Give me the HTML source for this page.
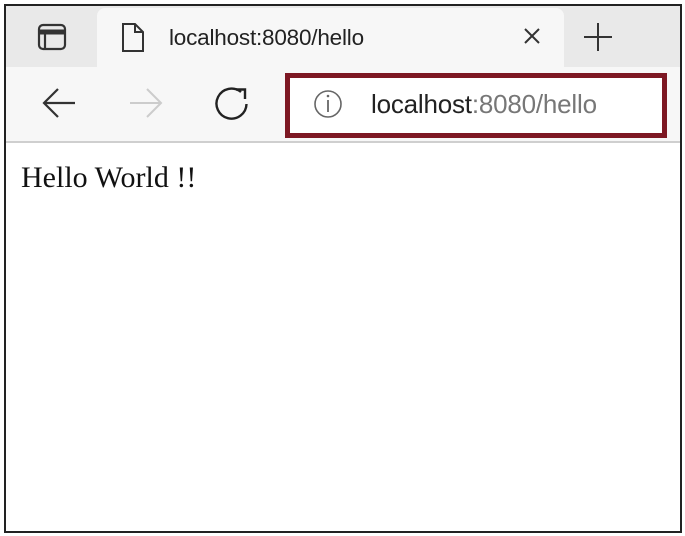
<!DOCTYPE html>
<html><head><style>
body{margin:0;width:685px;height:536px;background:#fff;position:relative;overflow:hidden;font-family:"Liberation Sans",sans-serif}
.frame{position:absolute;left:4px;top:4px;width:674px;height:525px;border:2px solid #222;}
.strip{position:absolute;left:6px;top:6px;width:674px;height:61px;background:#e9e9e9}
.tab{position:absolute;left:97px;top:8px;width:467px;height:59px;background:#f7f7f7;border-radius:8px 8px 0 0}
.bar{position:absolute;left:6px;top:67px;width:674px;height:74px;background:#f7f7f7;border-bottom:2px solid #cfcfcf}
.addr{position:absolute;left:285px;top:73px;width:372px;height:55px;border:5px solid #7d1823;background:#fff}
.t{position:absolute;font-size:22.5px;color:#222;letter-spacing:-0.2px}
</style></head><body>
<div class="strip"></div>
<div class="tab"></div>
<div class="bar"></div>
<div class="addr"></div>
<div class="frame"></div>
<svg style="position:absolute;left:0;top:0" width="685" height="200">
<rect x="39" y="25" width="26" height="24" rx="4" fill="none" stroke="#333" stroke-width="2.2"/>
<line x1="39" y1="32" x2="65" y2="32" stroke="#333" stroke-width="5"/>
<line x1="45" y1="32" x2="45" y2="49" stroke="#333" stroke-width="2.2"/>
<path d="M123 24h12l8 8v19h-20z M135 24v8h8" fill="none" stroke="#333" stroke-width="2"/>
<path d="M525 29l14 14M539 29l-14 14" stroke="#333" stroke-width="2"/>
<path d="M598 23v28M584 37h28" stroke="#333" stroke-width="2"/>
<path d="M75 103H44M58 89l-14 14 14 14" fill="none" stroke="#333" stroke-width="2.2"/>
<path d="M130 103h31M147 89l14 14-14 14" fill="none" stroke="#ccc" stroke-width="2"/>
<path d="M246.5 104A15 15 0 1 1 241 92" fill="none" stroke="#222" stroke-width="2.4"/>
<path d="M236 89.5H245V99" fill="none" stroke="#222" stroke-width="2.4"/>
<circle cx="328" cy="104" r="13" fill="none" stroke="#666" stroke-width="1.6"/>
<line x1="328" y1="100" x2="328" y2="112" stroke="#666" stroke-width="1.8"/>
<circle cx="328" cy="96" r="1.3" fill="#666"/>
</svg>
<div class="t" style="left:169px;top:25px">localhost:8080/hello</div>
<div class="t" style="left:371px;top:89px;font-size:26px">localhost<span style="color:#777">:8080/hello</span></div>
<div style="position:absolute;left:21px;top:161px;font-family:'Liberation Serif',serif;font-size:30px;color:#111">Hello World !!</div>
</body></html>
